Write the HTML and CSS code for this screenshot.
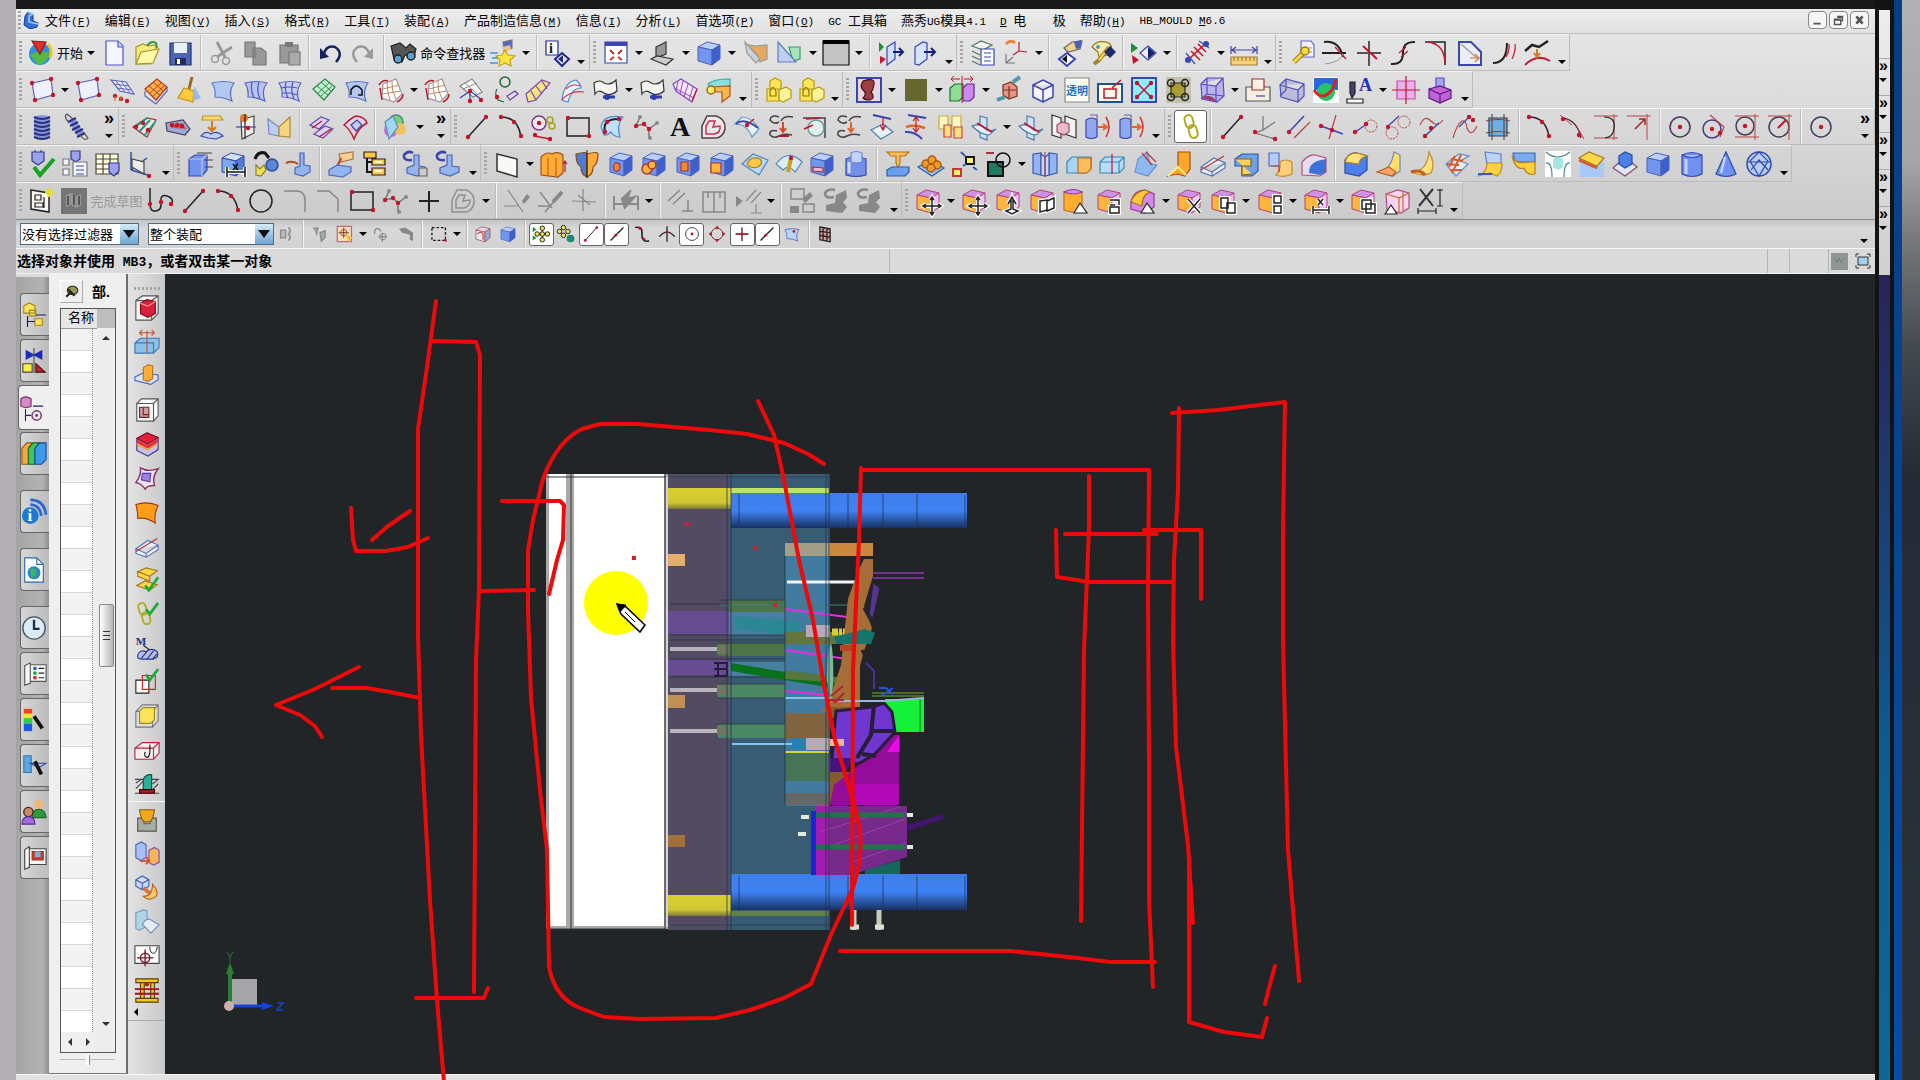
FILE: index.html
```
<!DOCTYPE html>
<html lang="zh-CN">
<head>
    <meta charset="UTF-8">
    <meta name="viewport" content="width=device-width, initial-scale=1.0">
    <title>HB_MOULD M6.6</title>
    <link rel="stylesheet" href="styles.css">
</head>
<body>
    <div class="desk"></div>
    <div class="app">
        <div class="title-strip"></div>
        <nav class="menu-bar">
            <span class="grip"></span>
            <svg class="logo" viewBox="0 0 16 18"><path d="M5 1l5 2v7l5 2-1 4-7 2-6-4 1-9z" fill="#2f6fd6" stroke="#123f8f"/><path d="M5 1l5 2-4 2v6l9 2" fill="none" stroke="#a9cbf7" stroke-width="1.5"/></svg>
            <button>文件<i>(<u>F</u>)</i></button>
            <button>编辑<i>(<u>E</u>)</i></button>
            <button>视图<i>(<u>V</u>)</i></button>
            <button>插入<i>(<u>S</u>)</i></button>
            <button>格式<i>(<u>R</u>)</i></button>
            <button>工具<i>(<u>T</u>)</i></button>
            <button>装配<i>(<u>A</u>)</i></button>
            <button>产品制造信息<i>(<u>M</u>)</i></button>
            <button>信息<i>(<u>I</u>)</i></button>
            <button>分析<i>(<u>L</u>)</i></button>
            <button>首选项<i>(<u>P</u>)</i></button>
            <button>窗口<i>(<u>O</u>)</i></button>
            <button><i>GC </i>工具箱</button>
            <button>燕秀<i>UG</i>模具<i>4.1</i></button>
            <button><i><u>D</u> </i>电<i>    </i>极</button>
            <button>帮助<i>(<u>H</u>)</i></button>
            <button><i>HB_MOULD <u>M</u>6.6</i></button>
            <div class="window-buttons">
                <button aria-label="最小化"><svg viewBox="0 0 19 18"><path d="M5 13h8" stroke="#555" stroke-width="2"/></svg></button>
                <button aria-label="还原"><svg viewBox="0 0 19 18"><path d="M8 5h6v5h-2M5 8h7v6H5zM5 9h7M8 6h6" fill="none" stroke="#555" stroke-width="1.5"/></svg></button>
                <button aria-label="关闭"><svg viewBox="0 0 19 18"><path d="M6 5l7 8M13 5l-7 8" stroke="#555" stroke-width="3"/></svg></button>
            </div>
        </nav>

        <div class="docks">
            <div class="dock-row">
                <div class="toolbar tb-standard" data-tools="start v new open save | cut- copy- paste- | undo redo- | finder star v | info e"></div>
                <div class="toolbar tb-view" data-tools="fit v laptop v cubeBlue v clip clipGreen v backdrop v | sheetPlay sheetOut e"></div>
                <div class="toolbar tb-utility" data-tools="layers csys v | handDiamond palette | triDiamond v | measure v ruler e"></div>
                <div class="toolbar tb-curve-edit" data-tools="wrenchPage trimA trimB curveS corner divide extend curveOffset e"></div>
            </div>
            <div class="dock-row">
                <div class="toolbar tb-surface" data-tools="quad v quad meshDots orangeMesh broom surf surf2 surfMesh greenMesh surfArch redMesh v redMesh meshAxis circles ruled wings fold v fold purpleMesh roll e"></div>
                <div class="toolbar tb-lock" data-tools="lockBox lockBox e"></div>
                <div class="toolbar tb-mould" data-tools="shaderS v olive v splitBox v redBlocks wireCube transText cutBox cyanX roundPts wireBox v lapSquares wireSlab earth penA v pinkCross punch e"></div>
            </div>
            <div class="dock-row">
                <div class="toolbar tb-spring" data-tools="coil spring m"></div>
                <div class="toolbar tb-free" data-tools="tubes tray press axisCube flip | sheets redSheet | balls v m"></div>
                <div class="toolbar tb-curve" data-tools="line arc circChain rect arcSurf spline letterA outline projA wrapA tangent wrapB isoA isoB yellowPlanes cross v cross frameBox cylArc cylArc e"></div>
                <div class="toolbar tb-direct" data-tools="chain* | line lineAxis linePar lineX lineCirc twoCirc curveDots waveDots gridBlue | arc arcTan arcBox arcCorner | circDot circTan circBox circArrow | circDot m"></div>
            </div>
            <div class="dock-row">
                <div class="toolbar tb-pmi" data-tools="plugCheck plugTree plugTable axisPlane e"></div>
                <div class="toolbar tb-sync" data-tools="cubeLines cubeDim gearPlug plugArrow | moldHand clipTree | lockPlug hookPlug e"></div>
                <div class="toolbar tb-feature" data-tools="plane v extrude revolve cubeHole cubeBoss cubePocket cubePad emboss sweep cubeSlot jar | drill bumps pattern unite v foldBlue trimBody splitBody draftBlue elbow slabLine sectionBox twoFaces shell | blend softA softB redSurf bendA bendB joint lid moveFace cubeBlue cyl cone sphere e"></div>
            </div>
            <div class="dock-row">
                <div class="toolbar tb-sketch" data-tools="sketch finish- profile line arc circle fillet- chamfer- rect spline plus offset- v | trimG- extendG- cornerG- | dimG- v | constrA- constrB- constrC- v | boxesG- hookG- hookG- e"></div>
                <div class="toolbar tb-direct-model" data-tools="om_move v om_move om_up om_copy cylTri om_pat blendTri v om_x om_pages v om_faces v om_dim v om_link shellTri dimX e"></div>
            </div>
        </div>

        <div class="selection-bar">
            <label class="combo combo-filter"><select aria-label="类型过滤器"><option>没有选择过滤器</option></select></label>
            <label class="combo combo-scope"><select aria-label="选择范围"><option>整个装配</option></select></label>
            <div class="toolbar tb-select" data-tools="chipG- | filterG- target v turnG- bendG- | marquee v | cubePink cubeBlue | snapDots* snapBall line* lineMid* curveS2 crossArc circDot* circQuad plusRed* lineMid* surfPt | gridRed"></div>
            <span class="down-arrow"></span>
        </div>

        <div class="cue-line">
            <p>选择对象并使用<i> MB3</i>，或者双击某一对象</p>
            <span class="cell cell-wide"></span>
            <span class="cell cell-small"></span>
            <span class="cell cell-mid"></span>
            <span class="cell cell-icons">
                <svg viewBox="0 0 18 18"><path d="M0 1h17v17H0z" fill="#8f9593"/><path d="M4 6l2 5 2-5 2 5 3-5" fill="none" stroke="#767c7a"/></svg>
                <svg viewBox="0 0 18 18"><path d="M2 5V2h3M13 2h3v3M16 13v3h-3M5 16H2v-3" fill="none" stroke="#333"/><path d="M4 5h10v8H4z" fill="#9fd0ee" stroke="#333"/></svg>
            </span>
        </div>

        <main class="workspace">
            <div class="resource-bar" id="resourceBar"></div>
            <section class="navigator">
                <header>
                    <button class="pin" aria-label="固定"><svg viewBox="0 0 20 20"><ellipse cx="11" cy="9" rx="5" ry="4" fill="#9a9a55" stroke="#222"/><path d="M5 15l4-4M7 8l6 6" stroke="#222" stroke-width="2"/></svg></button>
                    <h2>部.</h2>
                </header>
                <div class="list">
                    <div class="list-main">
                        <table><thead><tr><th>名称</th></tr></thead></table>
                        <div class="rows"></div>
                        <div class="h-scroll"><b></b><b></b></div>
                    </div>
                    <div class="v-scroll">
                        <span class="corner"></span><span class="up"></span>
                        <span class="thumb"></span><span class="down"></span>
                    </div>
                </div>
                <div class="splitter"><span></span></div>
            </section>
            <div class="toolbar side" data-tools="s_redCube s_split s_blocks s_pocket s_redTop s_sheet s_orange slabLine s_gold s_chain s_m s_check s_yellow s_redBox s_plug | s_cup s_cyls s_cubeTo s_calc s_cross s_rack"></div>
            <div class="viewport">
                <svg viewBox="165 274 1710 800" preserveAspectRatio="xMinYMin meet">
                    <defs>
                        <linearGradient id="pin" x2="0" y2="1"><stop stop-color="#3d7eea"/><stop offset=".5" stop-color="#3f82f3"/><stop offset="1" stop-color="#173263"/></linearGradient>
                        <linearGradient id="yel" x2="0" y2="1"><stop stop-color="#d8cf2f"/><stop offset=".7" stop-color="#d0c733"/><stop offset="1" stop-color="#7d7836"/></linearGradient>
                        <linearGradient id="screw" x2="0" y2="1"><stop stop-color="#e3b070"/><stop offset="1" stop-color="#a0703c"/></linearGradient>
                    </defs>

                    <!-- clamp plates -->
                    <path d="M546 474h122v455H546z" fill="#a8a8a8"/>
                    <path d="M549 474h17v452h-17zM574 474h90v452h-90z" fill="#fff"/>
                    <path d="M546 477h120M546 929h120M571 474v455M665 474v455" stroke="#333" fill="none"/>
                    <path d="M667 477v450" stroke="#fff"/>

                    <!-- plates -->
                    <path d="M668 474h61v456h-61z" fill="#524b62"/>
                    <path d="M729 474h101v456H729z" fill="#395c75"/>
                    <path d="M670 477h160M670 925h160" stroke="#2c4556"/>
                    <path d="M668 488h63v21h-63z" fill="url(#yel)"/>
                    <path d="M668 895h63v21h-63z" fill="url(#yel)"/>
                    <path d="M731 488h98v6h-98z" fill="#bde266"/>
                    <path d="M731 911h98v5h-98z" fill="#637f4b"/>
                    <path d="M731 493h236v35H731z" fill="url(#pin)"/>
                    <path d="M731 874h236v36H731z" fill="url(#pin)"/>
                    <path d="M668 554h17v12h-17zM668 695h17v13h-17zM668 835h17v12h-17z" fill="url(#screw)"/>

                    <!-- ejector inserts -->
                    <path d="M785 556h44v250h-44z" fill="#427ba0"/>
                    <path d="M785 543h45v13h-45z" fill="#a39e88"/>
                    <path d="M830 543h43v13h-43z" fill="#c9883d"/>
                    <path d="M668 611h61v23h-61zM668 660h61v15h-61z" fill="#674c91"/>
                    <path d="M729 611h56v24h-56zM729 662h56v14h-56z" fill="#467fa0"/>
                    <path d="M735 616l65 6v14l-65-7z" fill="#2a8793"/>
                    <path d="M729 600h56v12h-56zM718 643h67v13h-67z" fill="#4c7447"/>
                    <path d="M785 632h60v12h-60z" fill="#65763d"/>
                    <path d="M718 684h67v14h-67zM718 724h67v14h-67z" fill="#4b8764"/>
                    <path d="M717 645h12v9h-12zM717 685h12v10h-12zM717 726h12v9h-12z" fill="#6d775e"/>
                    <path d="M670 649h47M670 690h47M670 731h47" stroke="#b9b3bd" stroke-width="4"/>
                    <path d="M670 604h60M670 635h115M670 640h115M670 659h115M670 677h115M718 600h67M718 643h67M718 684h67M718 724h67M718 698h67" stroke="#272c3d" opacity=".7"/>
                    <path d="M714 663h13v13h-13M718 663v13M714 669h13" fill="none" stroke="#211d3a" stroke-width="2"/>
                    <path d="M731 663l108 18v8l-108-18z" fill="#08721b"/>
                    <path d="M785 670l58 8v5l-58-4z" fill="#56763b"/>
                    <path d="M787 582h77" stroke="#f4f4f4" stroke-width="3"/>
                    <path d="M720 605h143" stroke="#457d75"/>
                    <path d="M785 609l70 9M785 650l62 9M785 691l72 7" stroke="#e72be3" stroke-width="2"/>
                    <path d="M785 698h45M732 744h60" stroke="#80c6ed" stroke-width="2"/>
                    <path d="M785 713h45v26h-45z" fill="#80643f"/>
                    <path d="M785 751h44v30h-44z" fill="#477456"/>
                    <path d="M785 793h44v12h-44z" fill="#676765"/>
                    <path d="M806 625h24v12h-24zM806 738h24v12h-24z" fill="#b8a9b9"/>
                    <path d="M792 738h14v12h-14z" fill="#2681b2"/>
                    <path d="M785 752h44" stroke="#dfd238" stroke-width="2"/>
                    <path d="M832 632h18" stroke="#d9cf28" stroke-width="7" stroke-dasharray="6 1 3 1"/>

                    <!-- core -->
                    <path d="M864 559h9v17l-9 30 8 22-8 23-4 15v46h-38l8-14 11-33 7-66 10-28z" fill="#a66d38"/>
                    <path d="M873 583l7 5-7 30-4-3z" fill="#593391" stroke="#26222d"/>
                    <path d="M865 629l10 4-4 11h-34l-3-7z" fill="#14766b"/>
                    <path d="M840 645h15v6h-15z" fill="#b64525"/>
                    <path d="M827 680c0-22 2-35 4-37 3 11 3 44 0 60z" fill="#7cba98"/>
                    <path d="M873 573h51M873 578h51" stroke="#73338b" stroke-width="2"/>
                    <path d="M864 608l11 20M862 650l9 20 1 15" fill="none" stroke="#26242b" stroke-width="3"/>
                    <path d="M866 663l8 8v18" fill="none" stroke="#4b2f9b" stroke-width="2"/>
                    <path d="M830 707h34v11h-34zM830 772h20v30h-20z" fill="#87592e"/>
                    <path d="M872 693h52M872 696h52" stroke="#4d6929" stroke-width="2"/>
                    <path d="M879 688h7l7 6M881 696l12-8" stroke="#2554d6" stroke-width="2" fill="none"/>
                    <path d="M885 699h39v33h-39z" fill="#15f13a"/>
                    <path d="M920 699v33" stroke="#096c20"/>
                    <path d="M895 735h4v70h-69l4-20z" fill="#940c9a"/>
                    <path d="M899 735l-12 17h12z" fill="#ec0ae9"/>
                    <path d="M855 784h44v21h-44z" fill="#b00bb5"/>
                    <path d="M836 711l36-4 12-4 8 9 3 20-20 22-17 10-26-5z" fill="#7037d0" stroke="#2a1d3b" stroke-width="3"/>
                    <path d="M874 705l-3 30-14 23M872 731h24M862 754l14 2" fill="none" stroke="#281d36" stroke-width="4"/>
                    <path d="M838 701h46l40-3" stroke="#9fb6dc" stroke-width="2" fill="none"/>
                    <path d="M830 758h24l-8 14h-16z" fill="#45147e"/>
                    <path d="M830 739h14v7h-14z" fill="#f4b09a"/>
                    <path d="M831 696l12-10M834 703l10-10M829 700h15" stroke="#b62330" stroke-width="2"/>

                    <!-- slider -->
                    <path d="M816 806h91v51l-56 18h-35z" fill="#78298c"/>
                    <path d="M816 806h14v69h-14z" fill="#a41cad"/>
                    <path d="M820 850l85-31M820 832l80-25M850 863l56-20" stroke="#a53aab"/>
                    <path d="M816 815h90M816 847h90" stroke="#21734c" stroke-width="5"/>
                    <path d="M811 811h5v64h-5z" fill="#1426d8"/>
                    <path d="M801 817h8M798 834h8M907 815h6M907 847h6" stroke="#e2e8e2" stroke-width="4"/>
                    <path d="M908 825l35-11v5l-35 12z" fill="#42156f"/>
                    <path d="M865 870l35-10v14h-35z" fill="#16665f"/>
                    <path d="M854 910v20M879 910v20" stroke="#c9c9b8" stroke-width="5"/>
                    <path d="M850 927h9M875 927h9" stroke="#deded0" stroke-width="5"/>

                    <path d="M727 474v456M731 474v456M785 556v250M826 474v456M829 474v456M739 494v30M739 876v34M848 494v34M883 494v34M917 494v34M848 876v34M883 876v34M917 876v34M965 495v30M965 876v34" stroke="#1f3248" stroke-opacity=".75"/>
                    <path d="M632 558h4M685 524h4M753 548h4M773 605h4" stroke="#d3202b" stroke-width="4"/>

                    <!-- view triad -->
                    <path d="M230 979h27v26h-27z" fill="#a6a6a8"/>
                    <path d="M230 1003V972" stroke="#2d7c33" stroke-width="4"/>
                    <path d="M230 962l4 12h-8z" fill="#2d7c33"/>
                    <path d="M227 952l3 5 3-5M230 957v5" fill="none" stroke="#2d7c33"/>
                    <path d="M230 1006h34" stroke="#1443d6" stroke-width="3"/>
                    <path d="M262 1002l12 4-12 4z" fill="#1443d6"/>
                    <path d="M277 1003h6l-6 7h6" fill="none" stroke="#1443d6" stroke-width="1.5"/>
                    <circle cx="229" cy="1006" r="5" fill="#cbb1aa"/>

                    <circle cx="616" cy="603" r="32" fill="#ff0"/>
                    <path d="M617 604l9 3 19 18-5 7-19-18z" fill="#fff" stroke="#000" stroke-width="1.5"/>
                    <path d="M617 604l9 1-6 7zM625 612l10 10" stroke="#000"/>

                    <!-- pen strokes -->
                    <g class="ink">
                        <path d="M436 301L427 367 418 429V636L421 735 430 900 437 1000 444 1082"/>
                        <path d="M432 341L476 342 480 355 479 588 476 661 474 992"/>
                        <path d="M416 998H484L488 988"/>
                        <path d="M351 508L353 540 356 551H386L408 547 428 538M410 511L388 526 372 540"/>
                        <path d="M420 698L390 692 367 688H332M359 667L315 689 276 705 300 715 315 726 322 737"/>
                        <path d="M502 501L560 501 564 505 563 540 557 560 549 594M481 591L534 590"/>
                        <path d="M824 464L808 454 784 443 747 434 710 430 637 424 600 424 582 429Q557 441 543 479L533 520 528 550V610L531 698 540 790 547 850 549 967Q555 998 580 1008L604 1017 640 1019 716 1018 750 1010 784 998 811 984 830 937 853 888Q865 850 858 820L850 790 835 740 823 680 813 620 799 560 784 480 774 435 758 401"/>
                        <path d="M861 468L859 540 853 670 852 925M861 470H1149L1148 600 1149 759V900L1153 987"/>
                        <path d="M840 951H1010L1078 958 1110 962H1155M1089 476V530L1084 649 1081 921"/>
                        <path d="M1056 530L1057 577 1090 582H1173M1065 534H1157M1144 530H1201V599"/>
                        <path d="M1172 413L1218 410 1285 402 1283 530V640L1288 850 1299 981"/>
                        <path d="M1179 408L1178 490 1174 560 1173 640 1176 747 1188 845 1193 923M1189 857V1022L1224 1032 1262 1037 1267 1018M1265 1004L1269 988 1275 966"/>
                    </g>
                </svg>
            </div>
        </main>
        <footer class="status-bar"></footer>
    </div>
    <div class="behind">
        <div class="behind-bars">
            <span>»</span><span>»</span><span>»</span><span>»</span><span>»</span>
        </div>
        <div class="behind-view"></div>
    </div>
    <div class="frame"></div>
    <div class="wallpaper"></div>
    <script src="toolbars.js"></script>
</body>
</html>
```

FILE: styles.css
```
* {
    box-sizing: border-box;
}

body {
    margin: 0;
    height: 100vh;
    display: flex;
    overflow: hidden;
    background: #17181a;
    color: #000;
    font: 13px "Liberation Sans", "Noto Sans CJK SC", sans-serif;
}

button {
    margin: 0;
    padding: 0;
    border: 0;
    background: none;
    color: inherit;
    font: inherit;
    white-space: nowrap;
}

/* half-width latin runs inside chinese labels */
i {
    font: 11px "Liberation Mono", monospace;
    white-space: pre;
}

.desk {
    flex: none;
    width: 16px;
    background: #b2b0b3;
}

.app {
    flex: 1;
    min-width: 0;
    display: flex;
    flex-direction: column;
}

.title-strip {
    flex: none;
    height: 9px;
    background: #181818;
}

.menu-bar {
    flex: none;
    height: 25px;
    display: flex;
    align-items: center;
    gap: 14px;
    padding: 0 6px 3px 2px;
    background: linear-gradient(#ececec, #e2e2e2);
    border-bottom: 1px solid #bdbdbd;
}

.menu-bar .logo {
    width: 16px;
    height: 18px;
    margin: 0 -8px 0 -12px;
}

.window-buttons {
    display: flex;
    gap: 2px;
    margin-left: auto;
}

.window-buttons button {
    width: 19px;
    height: 18px;
    border: 1px solid #888;
    border-radius: 4px;
    background: #f6f6f6;
}

.window-buttons svg {
    display: block;
}

.docks {
    flex: none;
    background: linear-gradient(#e5e5e5, #cbcbcb);
    border-bottom: 1px solid #8c8c8c;
}

.dock-row {
    display: flex;
    height: 37px;
}

.toolbar {
    display: flex;
    align-items: center;
    height: 37px;
    border: 1px solid;
    border-color: #f4f4f4 #bcbcbc #bcbcbc transparent;
    overflow: hidden;
}

.tb-standard { width: 574px; }
.tb-view { width: 367px; }
.tb-utility { width: 319px; }
.tb-curve-edit { width: 294px; }
.tb-surface { width: 736px; }
.tb-lock { width: 91px; }
.tb-mould { width: 630px; }
.tb-spring { width: 103px; }
.tb-free { width: 332px; }
.tb-curve { width: 714px; }
.tb-direct { flex: 1; }
.tb-pmi { width: 158px; }
.tb-sync { width: 307px; }
.tb-feature { width: 1311px; }
.tb-sketch { width: 886px; }
.tb-direct-model { width: 561px; }

.grip {
    flex: none;
    width: 3px;
    height: 24px;
    margin: 0 3px 0 2px;
    background: repeating-linear-gradient(#a5a5a5 0 2px, transparent 2px 4px);
}

.menu-bar .grip {
    height: 18px;
    margin: 0;
}

.tool {
    flex: 1 1 34px;
    min-width: 0;
    height: 33px;
    display: flex;
    align-items: center;
    justify-content: center;
}

.tool svg {
    flex: none;
    width: 28px;
    height: 28px;
    overflow: visible;
}

.tool.labeled {
    flex: 0 0 auto;
    gap: 3px;
    padding: 0 1px;
}

.tool.on {
    border: 1px solid #666;
    border-radius: 3px;
    background: #fff;
}

.tool:disabled {
    color: #999;
    filter: grayscale(1);
}

.sep {
    flex: none;
    width: 2px;
    height: 100%;
    margin: 0 3px;
    border-left: 1px solid #bcbcbc;
    border-right: 1px solid #f6f6f6;
}

.drop {
    flex: none;
    width: 13px;
    height: 33px;
    display: flex;
    align-items: center;
    justify-content: center;
}

.drop::before,
.down-arrow::before {
    content: "";
    border: 4px solid transparent;
    border-top-color: #000;
    border-bottom: 0;
}

.drop.end {
    width: 15px;
    padding-top: 19px;
}

.drop.more {
    position: relative;
    width: 24px;
    padding: 19px 0 0 6px;
}

.drop.more span {
    position: absolute;
    top: -2px;
    right: 4px;
    font: bold 18px "Liberation Sans", sans-serif;
}

.tb-direct .drop.more {
    width: 36px;
    padding-left: 18px;
}

.selection-bar {
    flex: none;
    display: flex;
    align-items: center;
    height: 29px;
    padding: 0 5px 0 4px;
    background: linear-gradient(#c4c4c4, #d8d8d8 30%, #d2d2d2);
    border-bottom: 1px solid #f8f8f8;
}

.combo {
    position: relative;
    height: 22px;
    border: 1px solid #4f6c86;
    background: #fff;
}

.combo-filter {
    width: 119px;
    margin-right: 9px;
}

.combo-scope {
    width: 126px;
}

.combo select {
    appearance: none;
    width: 100%;
    height: 20px;
    padding: 0 0 0 1px;
    border: 0;
    background: none;
    color: #000;
    font: 13px "Noto Sans CJK SC", sans-serif;
    line-height: 20px;
}

.combo::before {
    content: "";
    position: absolute;
    top: 0;
    right: 0;
    width: 18px;
    height: 20px;
    background: linear-gradient(#d5ebfa, #6ea4d2);
}

.combo::after {
    content: "";
    position: absolute;
    top: 6px;
    right: 3px;
    border: 6px solid transparent;
    border-top: 8px solid #111;
    border-bottom: 0;
}

.tb-select {
    width: 564px;
    height: 28px;
    border: 0;
}

.tb-select .grip {
    display: none;
}

.tb-select .tool {
    height: 23px;
    flex-basis: 25px;
}

.tb-select .tool svg {
    width: 18px;
    height: 18px;
}

.tb-select .drop {
    width: 11px;
}

.down-arrow {
    margin: 14px 2px 0 auto;
    display: flex;
}

.cue-line {
    flex: none;
    display: flex;
    height: 25px;
    background: #dadada;
    border-bottom: 1px solid #f2f2f2;
}

.cue-line p {
    margin: 0;
    padding-left: 1px;
    width: 873px;
    font-size: 14px;
    font-weight: bold;
    line-height: 24px;
}

.cue-line p i {
    font-size: 13px;
    font-weight: bold;
}

.cell {
    border-left: 1px solid #b5b5b5;
}

.cell-wide { flex: 1; }
.cell-small { width: 22px; }
.cell-mid { width: 39px; }

.cell-icons {
    display: flex;
    align-items: center;
    gap: 5px;
    width: 47px;
    padding-left: 2px;
}

.cell-icons svg {
    flex: none;
    width: 18px;
    height: 18px;
}

.workspace {
    flex: 1;
    min-height: 0;
    display: flex;
}

.resource-bar {
    flex: none;
    width: 33px;
    padding: 16px 0 0 4px;
    background: linear-gradient(90deg, #a4a4a4, #b3b3b3 80%, #8d8d8d);
    border-top: 3px solid #d9d9d9;
}

.resource-bar button {
    display: flex;
    align-items: center;
    width: 29px;
    height: 43px;
    margin-bottom: 3px;
    border: 1px solid #666;
    border-right: 0;
    border-radius: 4px 0 0 4px;
    background: linear-gradient(90deg, #d6d6d6, #bcbcbc);
}

.resource-bar button.active {
    width: 31px;
    margin-left: -2px;
    height: 45px;
    margin-bottom: 2px;
    background: #efefef;
}

.resource-bar button.gap {
    margin-bottom: 15px;
}

.resource-bar svg {
    width: 26px;
    height: 28px;
}

.navigator {
    flex: none;
    width: 79px;
    display: flex;
    flex-direction: column;
    padding: 5px 11px 8px;
    border-right: 2px solid #6f6f6f;
    border-bottom: 1px solid #777;
    background: #efefef;
}

.navigator header {
    display: flex;
    align-items: center;
    gap: 9px;
    height: 24px;
    margin-bottom: 5px;
}

.pin {
    width: 23px;
    height: 23px;
    border: 1px solid;
    border-color: #fff #aaa #aaa #fff;
}

.navigator h2 {
    margin: 0;
    font-size: 14px;
}

.list {
    flex: 1;
    display: flex;
    width: 56px;
    border: 1px solid #555;
}

.list-main {
    display: flex;
    flex-direction: column;
    width: 36px;
}

.list table {
    border-collapse: collapse;
}

.list th {
    height: 19px;
    padding: 0 0 0 7px;
    border-bottom: 1px solid #999;
    background: #e6e6e6;
    font-weight: normal;
    line-height: 18px;
    text-align: left;
    white-space: nowrap;
}

.rows {
    flex: 1;
    width: 32px;
    border-right: 1px dotted #888;
    background: repeating-linear-gradient(#f3f3f3 0 21px, #d8d8d8 21px 22px, #fff 22px 43px, #d8d8d8 43px 44px);
}

.h-scroll {
    display: flex;
    justify-content: space-between;
    align-items: center;
    height: 20px;
    padding: 0 7px;
}

.h-scroll b {
    border: 4px solid transparent;
    border-left: 0;
    border-right-color: #333;
}

.h-scroll b + b {
    transform: scaleX(-1);
}

.v-scroll {
    flex: 1;
    display: flex;
    flex-direction: column;
    align-items: center;
    padding-bottom: 26px;
    background: #ededed;
}

.v-scroll .corner {
    align-self: stretch;
    height: 19px;
    background: #bdbdbd;
}

.v-scroll .up,
.v-scroll .down {
    border: 4px solid transparent;
    border-top: 0;
    border-bottom-color: #333;
    margin-top: 8px;
}

.v-scroll .down {
    margin-top: auto;
    transform: scaleY(-1);
}

.v-scroll .thumb {
    width: 15px;
    height: 63px;
    margin-top: 264px;
    border: 1px solid #888;
    border-radius: 2px;
    background: repeating-linear-gradient(#333 0 1px, transparent 1px 4px) center / 7px 10px no-repeat, linear-gradient(90deg, #fff, #b5b5b5);
}

.splitter {
    height: 10px;
    margin-top: 2px;
    display: flex;
    justify-content: center;
    background: linear-gradient(transparent 4px, #bbb 4px 5px, transparent 5px);
}

.splitter span {
    width: 4px;
    border-right: 1px solid #888;
    background: #fff;
}

.toolbar.side {
    flex: none;
    flex-direction: column;
    width: 37px;
    height: auto;
    padding-top: 13px;
    border: 0;
    background: linear-gradient(90deg, #e3e3e3, #c9c9c9);
}

.side .grip {
    width: 26px;
    height: 3px;
    margin: 0 0 1px;
    background: repeating-linear-gradient(90deg, #a5a5a5 0 2px, transparent 2px 4px);
}

.side .tool {
    flex: 0 0 34px;
    width: 34px;
}

.side .tool svg {
    width: 26px;
    height: 26px;
}

.side .sep {
    width: 100%;
    height: 2px;
    margin: 0;
    border: 0;
    border-top: 1px solid #f6f6f6;
}

.side .collapse {
    align-self: stretch;
    padding: 1px 0 4px 6px;
    border-bottom: 1px solid #aaa;
    font-size: 0;
    text-align: left;
}

.side .collapse::before {
    content: "";
    display: inline-block;
    border: 4px solid transparent;
    border-left: 0;
    border-right-color: #000;
}

.viewport {
    flex: 1;
    min-width: 0;
    background: #222528;
}

.viewport svg {
    display: block;
    width: 100%;
    height: 100%;
    overflow: visible;
}

.ink {
    fill: none;
    stroke: #ee0a0a;
    stroke-width: 4;
    stroke-linecap: round;
    stroke-linejoin: round;
}

.status-bar {
    flex: none;
    height: 6px;
    background: #e2e2e2;
    border-top: 1px solid #f6f6f6;
}

.viewport,
.ink {
    position: relative;
}

.behind {
    flex: none;
    display: flex;
    flex-direction: column;
    width: 19px;
    padding: 10px 4px 0 4px;
    background: #121315;
}

.behind-bars {
    height: 265px;
    padding-top: 48px;
    overflow: hidden;
    background: linear-gradient(#ededed, #cfcfcf);
}

.behind-bars span {
    display: block;
    height: 37px;
    border-top: 1px solid #aaa;
    font: bold 16px "Liberation Sans", sans-serif;
    line-height: 14px;
}

.behind-bars span::after {
    content: "";
    display: block;
    width: 0;
    margin-top: 5px;
    border: 4px solid transparent;
    border-top-color: #000;
    border-bottom: 0;
}

.behind-view {
    flex: 1;
    background: linear-gradient(#282459, #21346a 20%, #0c5c90 60%, #116698);
}

.frame {
    flex: none;
    width: 8px;
    background: linear-gradient(#063e83, #064ea8);
}

.wallpaper {
    flex: none;
    width: 18px;
    background: linear-gradient(#b2b1b4, #a5a5a8 15%, #7a7a7d 22%, #454950 32%, #252a36 44%, #28303a 80%, #2b3137);
}
```

FILE: toolbars.js
```
// small drawing helpers, every icon lives in a 28x28 box
const P = (d, s, f, w) => `<path d="${d}" stroke="${s || 'none'}" fill="${f || 'none'}" stroke-width="${w || 1.2}"/>`;
const C = (x, y, r, f, s) => `<circle cx="${x}" cy="${y}" r="${r}" fill="${f || 'none'}" stroke="${s || 'none'}" stroke-width="1.5"/>`;
const T = (x, y, t, size, f) => `<text x="${x}" y="${y}" font-size="${size}" font-weight="bold" font-family="Liberation Serif, Noto Sans CJK SC, serif" fill="${f}">${t}</text>`;
const D = (...pts) => pts.map(([x, y]) => C(x, y, 2.2, '#c4142c')).join('');
const cube = (top, front, side, s) => P('M3 8l9-5 13 3-8 5z', s, top, 1) + P('M3 8l14 3v15L3 22z', s, front, 1) + P('M17 11l8-5v14l-8 6z', s, side, 1);
const blue = cube('#b9cefc', '#7295f0', '#3f60cc', '#4a62b8');
const orange = cube('#cf92e6', '#ffb43c', '#ecc4f6', '#b0437d');
const sheet = (f, s) => P('M3 7q12-3 22 0-6 8-2 18-9-4-17-4 1-8-3-14z', s, f);
const mesh = (f, s) => P('M3 13L15 3l10 8-11 13z', s, f) + P('M7 10l11 9M11 6l10 9M7 18L19 7M10 21L22 10', s, '', 1);
const RED = '#c4142c', BLK = '#222', BLU = '#3a45b0', GRY = '#888';

const icons = {
    start: C(14, 15, 11, '#2b8fdc') + P('M4 16q8-6 20-2-3 10-12 12z', '', '#55b847') + P('M6 2l14 1-6 12z', '#8c1a1a', '#e0302c') + P('M22 5q5 5 2 14', '#f2c21c', '', 3),
    new: P('M6 2h12l5 5v19H6z', '#4a55c0', '#f4f6ff') + P('M18 2v6h5', '#4a55c0', '#cdd5fa'),
    open: P('M3 8l7-3 5 2 8-1v9l-5 10L3 25z', '#a8932a', '#f3ec7a') + P('M3 25l5-12 18-3-6 14z', '#a8932a', '#fdf9a8') + P('M14 7q4-6 9-3l1 5', '#3d9a34', '', 2),
    save: P('M4 4h21v22H4z', '#20306e', '#4b64b4') + P('M8 4h13v10H8z', '', '#e9f1f8') + P('M9 19h11v7H9z', '', '#222d55') + P('M11 20h3v5h-3z', '', '#fff'),
    cut: P('M9 3l8 15M24 8L9 18', '#999', '', 3) + C(7, 20, 3.5, '', '#999') + C(18, 22, 3.5, '', '#999'),
    copy: P('M4 3h10v15H4zM12 9h8l5 4v13H12z', '#777', '#999'),
    paste: P('M5 6h18v18H5z', '#777', '#999') + P('M10 3h8v5h-8z', '', '#777') + P('M14 13h11v13H14z', '#777', '#aaa'),
    undo: P('M8 14q3-8 11-6 9 6 1 15', '#15205e', '', 2.5) + P('M4 9v11l9-2z', '', '#15205e'),
    redo: P('M20 14q-3-8-11-6-9 6-1 15', '#999', '', 2.5) + P('M24 9v11l-9-2z', '', '#999'),
    finder: P('M2 7l9-3 6 5 4-4 6 5-2 8-9-2-3 7-8-3z', '#222', '#555') + C(9, 20, 4, '#5aa0d0', '#222') + C(22, 17, 4, '#5aa0d0', '#222'),
    star: P('M14 3l9-2v8l-8 3z', '#777', '#5367c5') + P('M13 8l8-2 1 4-6 4z', '', '#f3c184') + P('M16 11l3 5 7 1-5 4 1 6-6-3-6 3 1-6-4-4 6-1z', '#c6a21a', '#ffe544') + P('M1 14h8M3 19h6M1 24h8', '#3c9bd8', '', 1.5),
    info: P('M3 2h12v14H3z', '#20298a', '#fff') + T(6, 14, 'i', 14, '#111') + P('M12 20l7-6 7 6-7 7z', '#20298a', '#e8ecff', 2) + P('M20 16v8l-5-4z', '', '#20298a'),
    fit: P('M3 3h22v21H3z', BLU, '#fff') + P('M3 3h22v4H3z', '', BLU) + P('M8 11l4 4M20 11l-4 4M8 21l4-3M20 21l-4-3', '#c33b24', '', 2),
    laptop: P('M8 8l10-5v12l-10 4z', '#333', '#999') + P('M3 20l6-3 16 3-7 6z', '#333', '#ccc'),
    cubeBlue: blue,
    clip: P('M3 5l10 2 12-1v14l-7 3-3-8z', '#999', '#e9a95d') + P('M3 3l15 17-4 4L5 14z', '#999', '#cbd3da'),
    clipGreen: P('M14 8h11v12l-7 2z', '#3c9c60', '#a8e5b6') + P('M3 3l18 20H3z', '#5c7cc4', '#bcd0ee'),
    backdrop: P('M1 2h26v24H1z', '#111', '#c4c4c4') + P('M1 3h26', '#000', '', 4),
    sheetPlay: P('M2 3l5 5-5 5z', '', '#1d9130') + P('M3 17l6 3-6 5z', '', RED) + P('M10 8l8-5v17l-8 6z', BLU, '#cfe0ff') + P('M16 13h10M22 9l4 4-4 4', '#101f7e', '', 2),
    sheetOut: P('M5 8l8-5 4 1v16l-8 6-4-1z', BLU, '#d6e3ff') + P('M14 13h11M21 9l4 4-4 4', '#101f7e', '', 2),
    layers: P('M3 7l9-5 11 4-9 5zM3 12l8 4M3 17l8 4M3 22l8 4', '#4d7a5b', '#f3f3f3') + P('M12 10h13v16H12z', BLU, '#fff') + P('M15 14h7M15 18h7M15 22h7', BLU),
    csys: P('M4 5q5-5 9-1', '#e8843a', '', 3) + P('M17 3v9l-6 4M17 12l8 1', RED) + P('M4 15v9h9M4 24l7-6', '#777'),
    handDiamond: P('M8 9l8-6 10-1-2 8-12 3z', '#666', '#f2d18a') + P('M18 3l7-2v8l-5 1z', '', '#4b5fbb') + P('M3 20l8-6 8 6-8 7z', BLU, '#fff', 2) + P('M11 16v8l-5-4z', '', '#111'),
    palette: P('M3 8q5-8 17-4 6 6-1 12l-9 2-1-5z', '#96731e', '#f6ecb0') + P('M20 8l-10 13-5 4', '#a7842a', '', 4) + P('M20 8l-10 13', '#f7dd4d', '', 2) + P('M15 13l6-6 6 6-6 6z', '', '#1f2a6b') + C(9, 8, 2, '#38a3cc'),
    triDiamond: P('M1 4l7 5-7 5z', '', '#19923a') + P('M2 16l7 5-6 4z', '', RED) + P('M10 14l8-7 8 7-8 7z', BLU, '#eef') + P('M18 8v12l7-6z', '', '#162068'),
    measure: P('M3 22L22 4M10 8l9 9M7 12l9 9M14 5l8 8', RED, '', 1.5) + C(4, 21, 3, BLU) + C(22, 5, 3, BLU) + P('M15 2l10 7M2 14l9 11', BLU),
    ruler: P('M1 7v8M27 7v8M2 11h24M6 8l-4 3 4 3M22 8l4 3-4 3', BLU) + P('M1 18h26v8H1z', '#a4803c', '#f5d276') + P('M4 18v4M8 18v4M12 18v4M16 18v4M20 18v4M24 18v4', '#8b6423', '', 1),
    wrenchPage: P('M13 2h10l3 4v12H13z', '#5a6bc0', '#f3f3ff') + P('M15 9h9M15 13h9', '#e77') + P('M17 12L6 23', '#9a7c16', '', 5) + P('M17 12L6 23', '#f8dc3e', '', 3) + C(17, 12, 4, '#f8dc3e', '#9a7c16'),
    trimA: P('M3 3q15-2 19 15M1 14h24', BLK, '', 2) + P('M14 8l11 12', RED) + P('M4 25q16-2 18-10', '#999', '', 1),
    trimB: P('M14 2v25M2 14h24', '#555', '', 2) + P('M8 7l14 13', RED, '', 2),
    curveS: P('M2 25q12 1 12-11T26 3', BLK, '', 2) + P('M10 14l7-6M12 18l7-6', RED),
    corner: P('M3 3h20v23', BLK, '', 1.5) + P('M6 3q16 2 17 20', RED, '', 1.5),
    divide: P('M3 3h12l10 10v13H3z', BLU, '#e9eefc', 2) + P('M5 5l16 14', '#999') + P('M14 19h9l-4-4M23 19l-4 4', '#d97a1c'),
    extend: P('M3 24q14 0 14-20', BLK, '', 2) + P('M16 18q4-7 3-13M22 20q4-8 3-15', RED),
    curveOffset: P('M2 12l7-6 7 2 9-6', BLK, '', 2.5) + P('M2 26q12-12 25-4', RED, '', 2) + P('M14 10v7M11 14l3 4 3-4', '#d97a1c', '', 2),

    quad: P('M4 7l19-4 2 16-18 5z', '#5b63b8', '#f0f0fc') + D([4, 7], [23, 3], [25, 19], [7, 24]),
    meshDots: P('M3 4l15 2 8 12-14-3z', '#5b63c8', '#f4f2ff') + P('M8 5l9 11M13 5l9 12M6 8l15 2M9 12l15 2', '#5b63c8', '', 1) + D([7, 20], [13, 23], [19, 25]) + P('M7 20v5M13 20v5', '#d97a1c'),
    orangeMesh: mesh('#ffb24a', '#b5371b') + P('M3 15v5l11 8 11-13v-4', '#5b63b8', ''),
    broom: P('M17 1l-3 12', '#9b6a1d', '', 3) + P('M9 12l10 3-1 11-15-4z', '#c5901a', '#ffc93b') + P('M19 10l7 12-8 3z', '', '#9cb8f0'),
    surf: sheet('#b4c8f4', '#5a70c0'),
    surf2: sheet('#b8c2f4', '#5a64c0') + P('M10 6q-2 8 2 16M17 6q-3 8 1 17', '#4b55b8'),
    surfMesh: sheet('#cacffa', '#5a64c0') + P('M10 6q-2 8 2 16M17 6q-3 8 1 17M5 12q8-2 16 0M6 17q8-1 15 2', '#4b55b8'),
    greenMesh: mesh('#c4f0cc', '#2f8350'),
    surfArch: sheet('#b4c8f4', '#5a70c0') + P('M8 19v-5q5-8 11 0v5h-4', '#111', '', 1.5),
    redMesh: P('M6 8l13-5 6 15-8 8-12-4z', '#999', '#fff') + P('M10 7q0 9 3 17M15 5q-1 9 4 18M6 13l16-4M6 18l17-3', '#b86', '', 1) + P('M2 9q4-6 9-4M20 26q6-3 6-8M3 12l2 12', RED, '', 1.5),
    meshAxis: P('M3 10l12-7 10 13-9 5z', '#888', '#fff') + P('M8 7l12 11M6 13l14-6', '#888', '', 1) + P('M13 15v11M13 15l12 9M13 15L3 22', BLU) + D([13, 15], [13, 25], [24, 24]),
    circles: C(14, 6, 5, '', '#263') + P('M6 13q-3 5 1 11l6 2', '#263') + P('M16 20l8-5 3 3-8 6z', '#6a3ab5', '#ddd') + D([6, 21]),
    ruled: P('M2 18L18 4l8 3-14 17-8 2z', '#7a49a8', '#fbe583') + P('M7 15l5 9M12 10l6 8M18 5l5 8', '#7a49a8'),
    wings: P('M4 24q2-18 14-20 5 4 5 8-9 0-13 14z', '#4b8bd0', '#e9f6ff') + P('M4 24q8-10 22-8M8 13q6-6 14-3', '#d34'),
    fold: P('M3 7q6-4 10 0 6 3 12-3l1 11q-7 6-13 2-6-4-9 1z', '#333', '#f4f4f0') + C(16, 21, 3, '#2c3ea8') + P('M12 21h12', '#2c3ea8', '', 3),
    purpleMesh: P('M2 8l8-5 16 10-5 13L5 15z', '#7a49c8', '#f4e6ff') + P('M7 5l-2 10M12 5l-3 13M17 8l-4 13M22 11l-4 13M3 12l20 10', '#9a49c8', '', 1) + P('M21 25l5-12', RED),
    roll: P('M3 8q5-5 22-5v7l-18 3z', '#3aa', '#8de0d8') + P('M7 11l18-1v10l-8 6V16H7z', '#b5501c', '#f6b652') + C(6, 14, 4, '#fde96b', '#9a6a1c'),

    lockBox: P('M3 13h12v12H3zM6 13V5l5-3 6 3v8z', '#b49a10', '#ffe658') + P('M15 14l7-3 5 3v8l-8 4-4-2z', '#b49a10', '#fff29a') + P('M6 15q3-7 6 0v5H6z', '#8f7200'),
    shaderS: P('M2 2h24v24H2z', BLU, '#e6d8e0', 2) + P('M8 5q12-4 11 3t-3 8q5 6-1 8-5 0-7-2 4-4 1-7-5-4-1-10z', '#411', '#9c3c43'),
    olive: P('M3 3h22v22H3z', '', '#65682f'),
    splitBox: P('M2 12l5-4h8v13l-4 4H2z', '#187328', '#8fdc94') + P('M15 12l4-4h7v13l-4 4h-7z', '#6d1fa0', '#c98aee') + P('M3 3h9M25 3h-9M6 0L3 3l3 3M22 0l3 3-3 3M14 0v27', RED, '', 1),
    redBlocks: P('M8 9l8-3 6 5v9l-8 3-6-4z', '#732', '#e69484') + P('M2 24l8-3M18 6l7-5', '#59a', '', 4) + P('M14 10v12M8 14h13', '#732'),
    wireCube: P('M4 9l10-5 10 5v12l-10 5-10-5zM4 9l10 5 10-5M14 14v12', BLU, '#f4f4ff', 1.5),
    transText: P('M2 2h24v24H2z', '#888', '#fffef2') + T(3, 19, '透明', 11, '#1a6fd0'),
    cutBox: P('M2 8h24v18H2z', '#22508c', '#fffbe8', 2) + P('M8 13h12v9H8zM16 12L25 4', RED, '', 1.5),
    cyanX: P('M2 2h24v24H2z', BLU, '#8defff', 2) + P('M7 7l14 14M21 7L7 21', RED, '', 1.5) + D([7, 7], [21, 7], [7, 21], [21, 21]),
    roundPts: P('M2 1h25v26H2z', '', '#c4c2ae') + P('M7 7h14v14H7z', '#333', '#a99f2f') + [[7, 7], [21, 7], [7, 21], [21, 21]].map(p => C(p[0], p[1], 3.5, '', '#222')).join(''),
    wireBox: P('M3 8l6-6h16l1 18-7 6-15-3zM9 2v16l-6 5M9 18l17 2M3 8l15 2 7-8M18 10v16', '#5a49c8', '#b9b4e6') + P('M4 22q8-6 15 4z', '', '#9a3a72'),
    lapSquares: P('M2 11h24v14H2z', '#555', '#f6efe0') + P('M8 3h12v11H8z', '#933', '#fbf1de') + P('M12 20h9', BLU),
    wireSlab: P('M2 9l6-6 18 5v12l-6 6-17-5zM2 9l18 5 6-6M20 14v12M8 3v11l-6 6', '#4a52c0', '#bcbcd8'),
    earth: P('M1 1h26v26H1z', '', '#fff') + P('M2 2h24v12H2z', '', '#2a66e0') + C(14, 16, 9, '#26c46a') + P('M2 14q8 12 18 0l4-10', '#d22', '', 3),
    penA: P('M4 6h5v11l-3 5-2-5z', '#223', '#446') + P('M1 23h16v4H1z', '#222', '#fff') + T(13, 15, 'A', 18, '#2130b8'),
    pinkCross: P('M5 5h18v18H5z', '#c050a8', '#eab0ea') + P('M14 0v28M0 14h28', RED),
    punch: P('M10 2h8v11h-8z', '#4a52c0', '#a9a6f0') + P('M3 13l11-3 11 4v8l-11 5-11-5z', '#5c1a80', '#c062d8') + P('M3 13l11 5 11-4M14 18v9', '#5c1a80'),

    coil: P('M6 4q8-4 16 0v20q-8 4-16 0z', '', '#8a94dc') + P('M6 4q8 4 16 0M6 8q8 4 16 0M6 12q8 4 16 0M6 16q8 4 16 0M6 20q8 4 16 0M6 24q8 4 16 0', '#27307f', '', 2),
    spring: P('M9 7l9 15', '#8a94dc', '', 7) + P('M5 9l8-4M7 13l8-4M9 17l8-4M12 20l8-4M14 24l8-4', '#27307f', '', 2) + P('M6 10Q0 3 4 1l6 5M20 19l5 6q-3 4-8-3', '#556'),
    tubes: P('M2 14l14-9 9 2-9 17z', '#a33', '#f3e6de') + P('M3 15l13-10M8 19l11-12M13 23L24 9', '#1b9c8c', '', 2) + D([5, 14], [12, 10], [17, 17]),
    tray: P('M2 10l17-3 7 9-5 6-18-4z', '#445', '#9aa9d8') + P('M5 12l13-2 5 6-15-1z', '', '#c55') + D([8, 12], [13, 12], [18, 13]),
    press: P('M5 3h17l3 4H4z', '#c09020', '#ffdd6a') + P('M14 8v9M10 14l4 4 4-4', '#d97a1c', '', 2) + P('M3 23q5-6 10-2 6-4 12 2l-7 3-8-1z', BLU, '#bcd0ff'),
    axisCube: P('M9 7l13-4v17L10 26z', '#444', '#eee') + P('M4 14h20', BLU) + C(12, 5, 4, '#e5762a') + D([16, 15]) + P('M13 1v25', BLK),
    flip: P('M3 6l11 8v9L4 21z', '#7a8ac0', '#bccdf6') + P('M25 4L14 14v9l11 1z', '#b08a2c', '#f6d682'),
    sheets: P('M3 12l11-8 8 3-10 9zM7 21l11-8 8 3-10 9z', '#6a4ab5', '#dcd8fa') + P('M5 15l10-7M12 24l12-8', RED, '', 1.5),
    redSheet: P('M3 12q7-7 12-9 9 1 11 7-9 5-13 16-4-10-10-14z', '#b51d2c', '#e8d0e6', 1.5) + P('M10 12l6-5 5 5-6 6z', BLU, '#c8ccf4'),
    balls: C(14, 9, 7, '#7ccf6a', '#488') + C(9, 17, 7, '#d06ad8') + C(18, 16, 6, '#f0c45a') + P('M3 9l8-6 5 11-9 12z', '#68b', '#9cd9f0'),

    line: P('M5 24L23 4', BLK, '', 1.5) + D([5, 24], [23, 4]),
    arc: P('M4 4q17 0 20 20', BLK, '', 1.5) + D([4, 4], [17, 9], [24, 23]),
    circChain: C(9, 10, 7, '#f2e6f0', '#7a3a8a') + C(20, 7, 3, '', '#a9a21c') + C(22, 13, 3, '', '#a9a21c') + P('M4 23l16 3', RED, '', 1.5) + D([9, 10], [5, 22], [20, 26]),
    rect: P('M3 5h22v18H3z', BLK, '', 1.5) + D([4, 5], [25, 23]),
    arcSurf: P('M3 14q2-13 22-10-7 9-3 20-6 0-9-5-4 4-7 3z', '#4b8bd0', '#bfe0f8') + P('M7 19q-3-13 13-13', BLK, '', 2) + D([7, 19], [9, 9], [21, 6]),
    spline: P('M8 4L4 13l8-2 5 5 8-6M17 16v8', '#777', '', 1.5) + C(8, 4, 2, '#888') + C(25, 10, 2, '#888') + C(18, 25, 2, '#888') + D([4, 13], [12, 11], [17, 16]),
    letterA: T(4, 23, 'A', 28, '#111'),
    outline: P('M8 3h9q10 3 9 13-2 9-10 9H3V13z', '#444', '#f4e6ea', 1.5) + P('M10 8h6l-2 6 7-1q1 7-6 8H7v-8z', '#c33350', '', 1.5),
    projA: P('M2 11q12 0 17 13l7-8Q20 5 9 4z', '#5a9ac8', '#eaf5fc') + P('M3 11q8-7 22 4', BLU, '', 2) + D([14, 12]) + P('M14 12l7-6', RED),
    wrapA: P('M12 4Q4 1 3 7q4 5 9 2M26 4q-9-2-12 4M10 18q-8-2-7 4 4 4 9 1t13-1', '#444', '', 1.5) + P('M16 9v9M13 15l3 4 3-4', '#d9482c', '', 2) + P('M12 23h10', RED, '', 2),
    tangent: P('M2 5h22v20', '#444', '', 1.5) + C(15, 15, 8, '#dcefe8', '#699') + P('M5 6l14-1M3 16l9-4', RED, '', 1.5),
    wrapB: P('M12 4Q4 1 3 7q4 5 9 2M26 4q-9-2-12 4M10 18q-8-2-7 4 4 4 9 1t13-1', '#444', '', 1.5) + P('M16 9v9M13 15l3 4 3-4', '#e0672c', '', 2),
    isoA: P('M3 17l12-6 10 8-12 7z', '#4b7bb0', '#e8f2fa') + P('M5 2l18 4', BLU, '', 2) + P('M15 4v12M12 12l3 5 3-5', RED),
    isoB: P('M6 2l18 3M3 19q10-1 17 7', BLU, '', 2) + P('M4 14q8-3 19 1', '#e0672c', '', 2.5) + P('M14 5v14M11 15l3 4 3-4M11 8l3-4 3 4', RED),
    yellowPlanes: P('M3 3h9v13H3zM16 3h9v13h-9z', '#c8a83a', '#fff6c2') + P('M8 12h7v12H8zM18 14h8v11h-8z', '#c44', '#f6e07a'),
    cross: P('M10 3l7 2v22l-7-3z', '#4b7bb0', '#cfe2f4') + P('M2 13q8-3 12 2t12 1l-7 6q-8 0-17-9z', '#4b7bb0', '#e8f2fa') + P('M7 10l15 9', RED, '', 1.5),
    frameBox: P('M2 2l9 3v20l-9-3zM15 3l11 4v18l-11-4z', '#333', '#f2f2f2') + P('M7 12l5-3 7 2v8l-5 3-7-3z', '#a04a6a', '#ecb8cc'),
    cylArc: P('M2 7q6-4 11 0v17q-6 3-11 0z', BLU, '#8fa8f0') + P('M6 2h7v9', '#669') + P('M14 14h8M19 11l4 3-4 3', '#e0672c', '', 2) + P('M22 4q6 10 0 20', '#c33', '', 1.5),
    chain: `<g fill="none" stroke="#b4ac20" stroke-width="2"><rect x="8" y="2" width="8" height="13" rx="4" transform="rotate(-15 12 8)"/><rect x="12" y="12" width="8" height="13" rx="4" transform="rotate(-15 16 18)"/></g>`,
    lineAxis: P('M12 3v14l-8 3 20 6M12 17l12-8', '#777') + D([4, 19], [24, 26]),
    linePar: P('M4 20L20 3', BLU, '', 1.5) + P('M10 25L26 9', '#b44') + D([5, 19]),
    lineX: P('M3 13l22 8', BLU, '', 1.5) + P('M18 2L11 26', '#b44') + D([3, 13], [14, 17]),
    lineCirc: P('M3 20l14-10', BLU) + `<circle cx="20" cy="13" r="6" fill="none" stroke="#b44" stroke-dasharray="2 1"/>` + D([4, 19], [15, 11]),
    twoCirc: `<g fill="none" stroke="#b44" stroke-dasharray="2 1"><circle cx="8" cy="20" r="6"/><circle cx="20" cy="9" r="6"/></g>` + P('M3 14L15 3', BLU) + D([4, 14]),
    curveDots: P('M2 12q5-11 11-4t12-1', '#b44') + P('M6 24L21 10', BLU, '', 1.5) + D([7, 23], [13, 15]),
    waveDots: P('M2 25q4-14 9-17 4-1 5 7 4 10 10-2', '#b44') + P('M8 14L19 3', BLU) + D([18, 4], [22, 7]),
    gridBlue: P('M5 5h18v18H5z', '#246', '#6ab0e4') + P('M2 8q12-3 24 0M2 20q12-3 24 0M8 1v26M20 1v26', '#743'),
    arcTan: P('M4 5q14 2 18 20', BLK) + P('M1 2l12 10M17 12l8 14', '#b44', '', 1) + D([4, 6], [20, 22]),
    arcBox: P('M2 3h24M2 25h24M22 1v26', '#b44', '', 1) + P('M12 4q12 0 10 12-1 8-9 9', BLK),
    arcCorner: P('M2 3h24M22 1v26', '#b44', '', 1) + P('M10 16l10-10M14 6h6v6', '#a22', '', 1.5),
    circDot: C(14, 14, 10, '', '#4a3a5a') + D([14, 14]),
    circTan: C(12, 16, 9, '', '#4a3a8a') + P('M10 2l14 12-4 10', '#b44') + D([12, 16], [20, 20]),
    circBox: C(12, 13, 9, '', '#4a3a5a') + P('M2 3h24M2 24h24M22 1v26', '#b44', '', 1) + D([12, 13]),
    circArrow: C(13, 14, 10, '', '#4a3a5a') + P('M2 3h24M23 1v26', '#b44', '', 1) + P('M12 15l8-8', RED, '', 2),

    plugCheck: P('M4 2h12v9l-6 4-6-4zM7 2v-2M13 2v-2', '#333a90', '#9aa3ea') + P('M6 17l6 8L26 9', '#18a324', '', 4),
    plugTree: P('M10 1h9v8l-4 3-5-3z', '#333a90', '#9aa3ea') + P('M2 9h6v6H2zM2 19h6v6H2zM12 12h14v14H12z', '#777', '#f4f4ff') + P('M15 16h8M15 20h8M15 24h8', BLU, '', 1),
    plugTable: P('M2 4h22v20H2zM2 9h22M2 14h22M2 19h22M9 4v20M16 4v20', '#444', '#fffdd8') + P('M15 13h10v8l-5 5-5-4z', '#333a90', '#9aa3ea'),
    axisPlane: P('M4 2v18M4 20l20 6M4 20L20 8', '#2a52a0', '', 1.5) + P('M5 9l12 3v12L5 17z', '#444', '#eee') + D([22, 26]),
    cubeLines: P('M3 9l6-4h12v15l-5 6H3z', BLU, '#6f93ee') + P('M3 9h13v17M16 9l5-4', '#bcd', '') + P('M11 3h15M18 10h9M19 17h8', '#444', '', 1),
    cubeDim: cube('#cfe2fa', '#7ba8f0', '#4f80d8', BLU) + P('M8 17v10M26 17v10M8 22h18', '#fff', '', 4) + P('M8 17v10M26 17v10M8 22h18M14 14l5 6M19 14l-5 6', '#111', '', 1.5),
    gearPlug: P('M3 9q3-8 10-6l4 5', '#111', '', 3) + C(20, 15, 6, '#5b86d8', '#2e4a9a') + P('M4 15l4 4 4-4 2 5-5 6-5-1z', '#8a8226', '#eee05c'),
    plugArrow: P('M1 13q7-3 12 1', '#b5451d', '', 2) + P('M15 3h4v12l6 1v6l-7 4-8-2v-6l5-2z', '#4a66b8', '#94b4f0'),
    moldHand: P('M12 4l14-2v7l-12 3z', '#a37a3a', '#f6cf94') + P('M14 8l-4 9', '#c33', '', 2) + P('M2 20l8-5 14 2v5l-8 5-14-2z', '#4a66b8', '#94b4f0'),
    clipTree: P('M7 3v19h6M7 12h6', '#111', '', 2) + P('M4 2h12v6H4zM12 9h13v6H12zM12 18h13v7H12z', '#222', '#ffc84a') + P('M15 12h7M15 21h7', '#fff', '', 2),
    lockPlug: P('M11 10Q2 11 3 5q4-5 9-2', BLU, '', 2.5) + P('M13 5h5v11l6 1v5l-8 4-10-3v-5l7-3z', '#4a66b8', '#94b4f0') + P('M18 18h8v8h-8z', '#666', '#ccc'),
    hookPlug: P('M11 10Q2 11 3 5q4-5 9-2', BLU, '', 2.5) + P('M13 5h5v11l7 1v5l-9 4-10-3v-5l7-3z', '#4a66b8', '#94b4f0'),
    plane: P('M4 4l20 5v18L4 21z', '#333', '#f8f8f4', 1.5),
    extrude: P('M2 7q6-6 11-3 6-3 11 1v18l-5 4-17-2z', '#a3501a', '#ffab35') + P('M9 8v18M17 8v18', '#c3601a') + P('M26 22V12M24 14l2-3 2 3', '#a22'),
    revolve: P('M3 4q11-3 11 0v23q-6-2-6-10Q3 14 3 4z', '#8a4a10', '#4f7ad8') + P('M14 4q11-3 11 0 0 10-5 13 0 8-6 10z', '#8a4a10', '#ffab35') + P('M14 0v28', '#222', '', 1),
    cubeHole: blue + P('M8 13q5-1 5 4t-5 4q-3-4 0-8z', '#a33', '#f28a2c'),
    cubeBoss: blue + C(7, 19, 5, '#ffb43a', '#a33') + C(12, 15, 4, '#ffb43a', '#a33'),
    cubePocket: blue + P('M7 12h7v9H7z', '#a33', '#f28a2c'),
    cubePad: blue + P('M3 13h10v10H3z', '#a33', '#ffb43a'),
    emboss: P('M1 14l11-10 15 6-9 15z', '#4a86b8', '#b8daf4') + P('M6 14q4-9 13-5 4 4-2 8-8 2-11-3z', '#b07a1c', '#ffc84a'),
    sweep: P('M1 14Q13-2 27 12l-7 10q-6-8-12-2z', '#4a86b8', '#dceaf6') + P('M13 22l3-14', '#c8a21c', '', 4) + D([16, 8]),
    cubeSlot: blue + P('M5 17l10 1v4l-10-1z', '#a33', '#f0b8d8'),
    jar: P('M4 9q10-5 20 0v16q-10 3-20 0z', BLU, '#7290ea') + P('M9 3q5-3 11 0v9q-6 2-11 0z', '#6c86c8', '#c0d2fa') + P('M7 12v11', '#cfdcff', '', 3),
    drill: P('M3 2h22l-4 4h-5v7l-2 5-2-5V6H7z', '#b0761a', '#ffbd5a') + P('M3 20l5-3h17v5l-4 4H3z', '#2c5aa8', '#6aa0ee'),
    bumps: P('M1 17l13-7 13 8-12 8z', '#2c5aa8', '#9cc4f4') + C(9, 14, 4, '#f0982c', '#a55a10') + C(15, 10, 4, '#f0982c', '#a55a10') + C(20, 15, 4, '#f0982c', '#a55a10') + C(14, 18, 4, '#f0982c', '#a55a10'),
    pattern: P('M2 19h8v7H2z', '#c33', '#fff36a', 2) + P('M15 7h8v7h-8z', '#111', '#fff36a', 2) + P('M10 2l4 4M12 16l3-2M22 17l4 3', '#335aa8', '', 2),
    unite: P('M3 12h15v14H3z', '#111', '#1f7a64', 2) + C(18, 10, 7, '', '#111') + P('M1 3h8', '#a33', '', 2),
    foldBlue: P('M2 4l8-1v22l-8-2zM26 4l-8-1v22l8-2z', '#3a5ab0', '#94b4f4') + P('M10 4l4 3v19l-4-1zM18 4l-4 3v19l4-1z', '#3a5ab0', '#c8d8fa') + P('M14 2v25', '#b33', '', 1),
    trimBody: P('M2 12l5-5h19v11l-5 5H2z', '#3a88b8', '#a8d4f4') + P('M13 8h13v11l-4 4h-9z', '#b5701c', '#ffbb5c'),
    splitBody: P('M2 12l5-5h19v11l-5 5H2zM2 12h19v11M21 12l5-5', '#3a88b8', '#b8dcf8') + P('M14 4v20', RED),
    draftBlue: P('M6 9l9-7 3 12 7 1-9 11-13-4z', '#6a92d0', '#8cb8f4') + P('M10 3l10 12M14 2l10 10', '#b33'),
    elbow: P('M12 2h12v17l-5 7-8-2-9 2 10-9z', '#a3501a', '#ffa52a') + P('M2 26l10-9 8 8', '#fff07a', '', 2),
    slabLine: P('M2 17l13-9 11 5v5l-13 8-11-4zM2 17l11 5 13-9M13 22v4', '#5a72b8', '#e8f0fc') + P('M2 20L25 6', '#b33'),
    sectionBox: P('M2 9l7-5h16v17l-6 5H9V16H2z', '#2c5aa8', '#6fa0ea') + P('M2 9h16v7H9v9l10-1', '#8f6010', '#ffd25a'),
    twoFaces: P('M2 3h10v13H2z', '#5a72b8', '#b4ccf6') + P('M13 12q5-4 12 0v12q-8 4-16 1 5-5 4-13z', '#c08a2c', '#ffcf7a') + P('M4 16h8v6', '#c33'),
    shell: P('M2 12q7-8 13-7l11 3v14l-6 4-18-1z', '#b0507a', '#e6dcee') + P('M9 23q0-9 8-12l9-2v13l-6 3z', '', '#3f72d8'),
    blend: P('M3 10q5-8 12-7l10 3v14l-8 6-14-3z', '#2a4aa8', '#4a80e8') + P('M3 12q2-9 12-9l10 3q-8 2-8 8z', '#b5801c', '#ffe27a'),
    softA: P('M19 2l6 3v16l-7 5-16-4q14-1 17-20z', '#6a8ab8', '#ffdf6a') + P('M2 22l12-5 7 5-4 4z', '#c35a1c', '#f7a868'),
    softB: P('M20 2q7 12 2 21-8 4-20-1 16 0 18-20z', '#c08a2c', '#ffe27a') + P('M2 22q9-3 14 3', '#c35a1c', '', 3),
    redSurf: P('M3 14L16 4l10 2-9 5 8 3-12 12-6-7z', '#6a8ab8', '#e4effc') + P('M4 14l12 1M8 9l12 2M7 20l12 0M12 6L6 17M18 5l-9 18', '#d9582c', '', 2),
    bendA: P('M9 2l16 2v11l-14-1z', '#5a82c0', '#bcd4fa') + P('M11 13h15q0 10-5 13l-7-3-12 3q9-3 9-13z', '#c08a2c', '#ffd23f') + P('M2 24h14', '#3a5ac0', '', 2),
    bendB: P('M3 3h22v9H5z', '#3a6ab0', '#7aaaf0') + P('M2 6q3 9 18 6h5v12q-8 2-11-6-8 3-12-12z', '#b5801c', '#ffcf3a'),
    joint: P('M1 1h26v26H1z', '', '#fff') + P('M9 9q5-3 10 0v8q-5 5-10 0z', '', '#a4e6e4') + P('M2 2q11 10 24 0M2 13q6-1 6 14M26 13q-6-1-6 14', '#4a8a8c', ''),
    lid: P('M3 12h24v15H3z', '', '#a9c8fa') + P('M2 8l10-6 15 6-7 8z', '#a3801c', '#ffd84a') + P('M2 10l18 8', '#d9582c', '', 3),
    moveFace: P('M2 18l12-11 12 10-12 9z', '#8a4a6a', '#dce6f6') + P('M8 6l6-4 7 3v9l-7 4-6-4z', '#2a4aa8', '#4a80e8'),
    cyl: P('M4 5q10-5 20 0v19q-10 5-20 0z', BLU, '#6f92f0') + P('M4 5q10 5 20 0', BLU, '#a9c2fb') + P('M8 9v15', '#c4d4ff', '', 3),
    cone: P('M14 2l10 22q-10 5-20 0z', '#2a4aa8', '#6f92f0') + P('M13 7L9 23', '#c4d4ff', '', 2.5),
    sphere: C(14, 14, 12, '#b9ccfa', '#2a4aa8') + P('M2 12h24M14 2L5 11l9 15 9-15zM6 20l8-10 9 10', '#2a4aa8'),

    sketch: P('M3 3l18 3v19L3 22z', '#222', '#f8f8f0', 1.5) + P('M7 8h6v5H7zM7 16h8v4H7zM16 10v11', '#222') + P('M21 1v9M17 5h9', '#e8de1c', '', 3),
    finish: P('M1 1h26v26H1z', '', '#6f7677') + P('M6 8l5-2 5 3 5-2v12l-5 2-5-3-5 2z', '', '#8f9697') + P('M8 9v9M14 8v10M19 9v9', '#555', '', 2),
    profile: P('M4 1v16q0 8 6 7t5-9 6-6 5 8', BLK, '', 1.5) + D([4, 17], [15, 15], [25, 17]),
    circle: C(14, 14, 11, '', BLK),
    fillet: P('M3 4h12q9 0 9 9v12', GRY, '', 1.5),
    chamfer: P('M3 4h12l9 8v13', GRY, '', 1.5),
    plus: P('M14 4v21M4 14h20', BLK, '', 2),
    offset: P('M8 3h9q9 3 8 13-2 9-9 9H3V13zM10 8h6l-2 6 7-1q0 6-6 8H7v-8z', '#8f8f8f', '', 1.5),
    trimG: P('M5 3l15 22M1 19h14', GRY) + P('M19 14l5-7 3 3-6 7z', '', GRY),
    extendG: P('M3 5l12 16M8 25L25 5M1 19h12', GRY, '', 1.5) + P('M16 15L25 5', GRY, '', 4),
    cornerG: P('M13 2v22M2 14l24 1M8 8l12 10', GRY),
    dimG: P('M2 9v14M26 9v14M2 17h24', GRY, '', 2) + P('M9 12l10-9-3 8 8-2-12 13', GRY, GRY),
    constrA: P('M2 14L14 3M7 17L19 6M16 24h11M22 13v11', GRY, '', 1.5),
    constrB: P('M3 5h22v20H3zM14 5v20M8 5v6M20 5v6', GRY, '', 1.5),
    constrC: P('M2 9l7 5-7 6z', '', GRY) + P('M12 14L22 3M17 16L27 5M17 26h11M22 17v9', GRY),
    boxesG: P('M3 2h13v10H3zM15 17h11v8H15z', GRY, '', 1.5) + P('M2 19h9v7H2zM14 12l8-7 3 4-8 7z', '', GRY),
    hookG: P('M12 10Q3 12 3 6q3-5 10-3', GRY, '', 2.5) + P('M14 8l10-5 1 8-4 4 4 5-5 6-16-2v-6l9-2z', '', GRY),

    cylTri: P('M3 5q9-5 18 0v18q-9 4-18 0z', '#c3701a', '#ffae2e') + P('M3 5q9-5 18 0-9 4-18 0z', '#8a3ab0', '#d48af0') + P('M13 26l6-10 7 10z', '#222', '#fff'),
    blendTri: P('M2 15q3-12 14-12l9 4v13l-9 6-14-4z', '#9a3a8a', '#d48af0') + P('M2 15q3-10 14-12l5 2q-8 3-8 14z', '#a3701a', '#ffc43c') + P('M12 26l6-10 7 10z', '#222', '#fff'),
    shellTri: P('M3 7l12-4 11 3v15l-8 5-14-3z', '#b04a8a', '#f4d4ee') + P('M3 7l13 4v15M16 11l10-5M20 4v20', '#c86a3a') + P('M2 27l6-9 6 9z', '#222', '#fff'),
    dimX: P('M4 2l13 17M17 2L3 19', '#333', '', 2) + P('M24 2v17M21 3h6M21 19h6M2 24h18M2 21v6M20 21v6', '#222'),

    chipG: P('M4 8h8v12H4zM16 4q7 5 0 10 7 4 0 10', GRY, '#bbb', 2),
    filterG: P('M3 5h8l-2 5v6M14 12l8-3v10l-6 6z', GRY, '#aaa', 2),
    target: P('M2 2h22v24H2z', '#c46a7a', '#f6e2b8', 2) + P('M12 4v16M4 12h16', '#222') + C(12, 12, 5, '', '#c33') + P('M14 13l12 7-7 6z', '', '#f3c23a'),
    turnG: P('M4 14Q3 4 11 6l3 4M16 12v14M10 18h13', GRY, '', 2) + C(17, 18, 5, '', GRY),
    bendG: P('M3 6l10-2 12 8v13l-5-2v-8L8 12z', '', GRY),
    marquee: `<path d="M3 4h21v20H3z" fill="none" stroke="#111" stroke-width="2" stroke-dasharray="4 3"/>` + D([24, 24]),
    cubePink: cube('#f4d8e4', '#e8e8f4', '#9aa6d8', '#844') + P('M5 14q6-5 9 0v9', '#c44', '', 2),
    snapDots: P('M1 3l6 4-6 4zM1 16l6 4-6 4z', '', '#1a9a34') + P('M16 3v22M6 14h20', '#444', '', 2) + [[16, 5], [16, 23], [8, 14], [24, 14], [16, 14]].map(p => C(p[0], p[1], 3.5, '#ece25a', '#222')).join(''),
    snapBall: [[10, 4], [10, 16], [4, 10], [17, 10]].map(p => C(p[0], p[1], 3.5, '#ece25a', '#222')).join('') + C(21, 21, 6, '#1c8a78'),
    lineMid: P('M4 24L24 4', BLK, '', 2) + D([12, 16]),
    curveS2: P('M3 4q12-3 11 10t11 11', BLK, '', 2.5) + D([10, 5], [17, 22]),
    crossArc: P('M2 18Q14 4 26 18M14 2v24', BLK, '', 2) + D([14, 11]),
    circQuad: C(14, 14, 9, '', '#733') + D([14, 4], [14, 24], [4, 14], [24, 14]),
    plusRed: P('M14 4v21M4 14h20', '#511', '', 2) + D([14, 14]),
    surfPt: sheet('#b8d4f8', '#4b62b8') + D([17, 10]),
    gridRed: P('M6 3l16 3v20L6 23zM11 4v20M17 5v20M6 10l16 2M6 16l16 3', '#222', '#d99', 2),

    s_redCube: P('M2 6l7-5h17v19l-7 7H2zM2 6h17v21M19 6l7-5', '#555', '#f4f4f4') + P('M7 9l7-4 9 2v13l-8 4-8-4z', '#7c0a1c', '#d8203c') + P('M7 9l8 3 8-5', '#f99'),
    s_split: P('M1 15l6-5h20v10l-6 6H1zM1 15h20v11', '#3a78b0', '#8cc0ea') + P('M14 2v24M6 4h16M9 1L6 4l3 3M19 1l3 3-3 3', '#c4502c'),
    s_blocks: P('M1 15l8-4 17 2v5l-8 5-17-4z', '#4a62b8', '#d4e2fa') + P('M10 5l5-3 5 1v14l-5 3-5-2z', '#b5701c', '#ffae3c'),
    s_pocket: P('M3 7l5-5h18v18l-5 6H3zM3 7h18v19M21 7l5-5', '#555', '#fbfbfb') + P('M6 11h10v11H6z', '#722', '#c8a0a0') + P('M10 11v8h6', '#722'),
    s_redTop: P('M3 8l11-6 12 5v13l-11 7-12-6z', '#4a3a8a', '#c8c0e8') + P('M3 8l11-6 12 5-11 7z', '#8c0a1c', '#e0203c') + P('M3 9l12 6 11-7v4l-11 7-12-6z', '', '#e23040') + P('M3 13l12 6 11-7v2l-11 7-12-6z', '', '#f2a02c'),
    s_sheet: P('M7 3q8 5 19 1-7 9-4 18-8 0-10 4-4-6-10-7 6-8 5-16z', '#84315c', '#f0e2f4', 1.5) + P('M9 9h9l-1 9-9-2z', '#5a3ab8', '#9a82e0'),
    s_orange: P('M2 6q12-4 24 1-5 10-3 19-10-7-19-5 0-9-2-15z', '#9a3a0a', '#ff9c1a'),
    s_gold: P('M4 5l9-4 12 3-8 6zM4 5v5l13 5v-5zM3 20l9-5 13 4-8 6z', '#a07a14', '#ffd54a') + P('M12 20l4 5 10-14', '#1dac3a', '', 3),
    s_chain: `<g fill="none" stroke="#b4ac20" stroke-width="2"><rect x="5" y="2" width="8" height="13" rx="4" transform="rotate(-15 9 8)"/><rect x="9" y="12" width="8" height="13" rx="4" transform="rotate(-15 13 18)"/></g>` + P('M13 9l4 5 9-12', '#1dac3a', '', 3),
    s_m: T(2, 11, 'M', 12, '#20298a') + P('M10 11l8 6', BLK) + P('M4 22q2-7 9-4 6-5 12 0 3 6-5 8H8q-5 0-4-4z', '#2a3488', '#b8c0ec') + P('M8 25l6-7M14 26l7-9M20 26l5-6', '#2a3488'),
    s_check: P('M2 12h14v14H2z', '#222', '#fff') + P('M9 7h14v15H9z', '#c22') + P('M13 6l4 6 9-12', '#1dac3a', '', 3),
    s_yellow: P('M2 9l7-7h17v17l-6 7H2zM2 9h18v17M20 9l6-7', '#777', '#ddd') + P('M6 9l4-4h12v13l-4 4H6z', '#a08a14', '#fbe45a'),
    s_redBox: P('M1 12l8-6h18v11l-6 7H1zM1 12h20v12M21 12l6-6', '#b5203c', '#faf0f0') + P('M12 16q-2 6 3 6 3-3 2-14', '#111'),
    s_plug: P('M1 9h26M1 24h26M2 13l6-4M2 19l8-8M20 14l6-5M20 20l6-6', '#444') + P('M10 20V9q3-6 9-5v16z', '#0c4a44', '#26b09c') + P('M6 20h16v4H6z', '#400', '#a02030'),
    s_cup: P('M4 12h5l2 6h6l2-6h5v14H4z', '#555', '#a8ada4') + P('M6 3h16q-1 10-5 13h-6Q7 13 6 3z', '#8a5a0a', '#f2a81c'),
    s_cyls: P('M2 4l6-3 5 3v14l-6 3-5-3z', '#4a62b8', '#a8c0f6') + P('M16 10l6-3 5 3v13l-6 3-5-3z', '#7a52a8', '#f8b45a') + P('M7 22l9-1-3-4M16 21l-3 4', '#d9502c', '', 2),
    s_cubeTo: P('M2 5l7-4 7 4v7l-7 4-7-4zM2 5l7 4 7-4M9 9v7', '#3a62b8', '#c8dcf8') + P('M10 14l9 7', '#e0703c', '', 4) + P('M20 10q7 8 4 13-8 6-14 0 10 0 10-13z', '#c05a1c', '#ffc86a'),
    s_calc: P('M2 4l8-3 4 1v16l-8 5-4-2z', '#7a9ab8', '#b0d4e4') + P('M9 17q3-7 8-6l10 6-9 9q-4-5-9-9z', '#7a8ab8', '#e4ecf8'),
    s_cross: P('M1 3h26v19H1z', '#444', '#fff') + P('M12 7v18M3 16h18', '#7a1a2a', '', 1.5) + C(12, 16, 5, '', '#7a1a2a') + P('M17 4q0 8 5 7 3-2 3-7', '#222', '', 1),
    s_rack: P('M2 2h24v4H2zM2 23h24v4H2zM7 6h4v17H7zM18 6h4v17h-4z', '#5a3a00', '#f2c81c') + P('M1 13h26M1 18h26', '#a01020', '', 2) + D([14, 8])
};

// orange/purple cubes share a body and differ by the badge
const badges = {
    move: 'M18 11v16M10 19h16M16 13l2-3 2 3M16 25l2 3 2-3M12 17l-3 2 3 2M24 17l3 2-3 2',
    up: 'M17 12v10l-5 2 6 3 6-3-5-2V12l3 5-4-7-4 7z',
    copy: 'M12 14l7-1v10l-7 2zM19 14l7-3v10l-7 3z',
    pat: 'M15 13h9v5M24 20v6h-9v-6zM15 18h5',
    x: 'M13 12l12 14M25 12L13 26',
    pages: 'M12 11h7v10h-7zM18 16h8v10h-8z',
    faces: 'M18 9h7v7h-7zM18 19h7v7h-7z',
    dim: 'M11 19v8M27 19v8M11 23h16M16 12l5 6M21 12l-5 6',
    link: 'M13 13h9v9h-9zM17 17h9v9h-9z'
};
for (const key in badges) {
    icons['om_' + key] = orange + P(badges[key], '#fff', key === 'x' ? '' : '#fff', 4) + P(badges[key], '#222', '', 1.5);
}

const labels = { start: '开始', finder: '命令查找器', finish: '完成草图' };

function draw(name) {
    return `<svg viewBox="0 0 28 28">${icons[name]}</svg>`;
}

function tool(token) {
    if (token === '|') return '<span class="sep"></span>';
    if (token === 'v') return '<button class="drop" aria-label="展开"></button>';
    if (token === 'e') return '<button class="drop end" aria-label="工具条选项"></button>';
    if (token === 'm') return '<button class="drop more" aria-label="更多"><span>»</span></button>';
    const name = token.replace(/[-*]$/, '');
    const text = labels[name] || '';
    const cls = 'tool' + (text ? ' labeled' : '') + (token.endsWith('*') ? ' on' : '');
    return `<button class="${cls}" aria-label="${text || name}"${token.endsWith('-') ? ' disabled' : ''}>${draw(name)}${text}</button>`;
}

document.querySelectorAll('.toolbar').forEach(bar => {
    bar.innerHTML = '<span class="grip"></span>' + bar.dataset.tools.split(' ').map(tool).join('');
    if (bar.classList.contains('side')) {
        bar.innerHTML += '<button class="collapse" aria-label="收起"></button>';
    }
});

const tabs = [
    ['装配导航器', P('M3 4l6-3 6 3v8H3zM9 9h7v6H9zM15 18h8v7h-8z', '#a08a14', '#ffe45a') + P('M7 15v12M7 21h8M16 14h11', '#111a70'), ''],
    ['约束导航器', P('M5 2l9 5 9-5v11l-9-5-9 5z', '', '#1c2cb8') + P('M2 17h10v9H2z', '#444', '#ffee4a') + P('M16 17l10 9H16z', '#411', '#c8202c') + P('M14 0v27', '#333', '', 1), ''],
    ['部件导航器', P('M2 4q5-4 11 0v8q-6 3-11 0z', '#7a2a6a', '#d48ac4') + P('M7 15v13M7 22h6M15 12h11', '#1c2470') + C(19, 22, 5, '', '#7a2a6a') + C(19, 22, 1.5, '#7a2a6a'), 'active'],
    ['重用库', P('M1 8l5-6h6L8 8v17H1z', '#8a5a14', '#f6a83a') + P('M8 8l5-6h7l-5 6v17H8z', '#1a6a2a', '#3cc85a') + P('M15 8l5-6h7v18l-5 5h-7z', '#1a4a9a', '#3c9ae8'), 'gap'],
    ['HD3D 工具', C(10, 18, 9, '#1c7ad0') + T(7, 24, 'i', 18, '#fff') + P('M10 6q10 0 12 12M10 1q15 0 17 16', '#2a6ad0', '', 3), 'gap'],
    ['浏览器', P('M4 1h13l7 7v19H4z', '#2a6ab0', '#fff') + P('M17 1v7h7', '#2a6ab0') + C(14, 17, 7, '#2a8ac0') + P('M10 13q6-2 7 4-2 6-6 5z', '', '#3cb46a'), 'gap'],
    ['历史记录', C(14, 14, 12, '#dcecf6', '#456') + P('M14 5v10h6', '#1c2c4a', '', 2.5), ''],
    ['系统材料', P('M4 5l6-3v22l-6 2zM10 4h17v18H10z', '#555', '#f8f8f8') + C(15, 8, 2, '#2a6ad0') + C(15, 13, 2, '#1ca34a') + C(15, 18, 2, '#d0301c') + P('M19 8h6M19 13h6M19 18h6', '#222'), ''],
    ['可视化', P('M3 2h9v6H3z', '', '#f0401c') + P('M3 7h9v6H3z', '', '#f4e02c') + P('M3 12h9v6H3z', '', '#2cd04a') + P('M3 18h9v8H3z', '', '#1c5ae8') + P('M14 10l9 13', '#111', '', 4), ''],
    ['加工向导', P('M3 3h8v18H3z', '#2a7ac0', '#5aa8e0') + P('M10 11h17l-8 5z', '#2a4ab0') + P('M15 9l7 14', '#111', '', 4), ''],
    ['角色', C(19, 6, 5, '#f0b878') + P('M12 20q0-9 7-9t8 9z', '#1a6a2a', '#2c9a3c') + C(8, 14, 5, '#c88a6a', '#4a2a1a') + P('M1 27q0-8 7-8t7 8z', '#5a2a9a', '#a46ae0'), ''],
    ['系统场景', P('M4 5l5-3v22l-5 2zM9 4h18v17H9z', '#444', '#f6f6f6') + P('M12 7h12v9H12z', '#b02a1c', '#c8402c') + P('M15 7h6v6h-6z', '', '#6ab8e8'), '']
];
document.getElementById('resourceBar').innerHTML = tabs.map(([label, art, cls]) =>
    `<button class="${cls}" aria-label="${label}"><svg viewBox="0 0 28 28">${art}</svg></button>`).join('');
```
